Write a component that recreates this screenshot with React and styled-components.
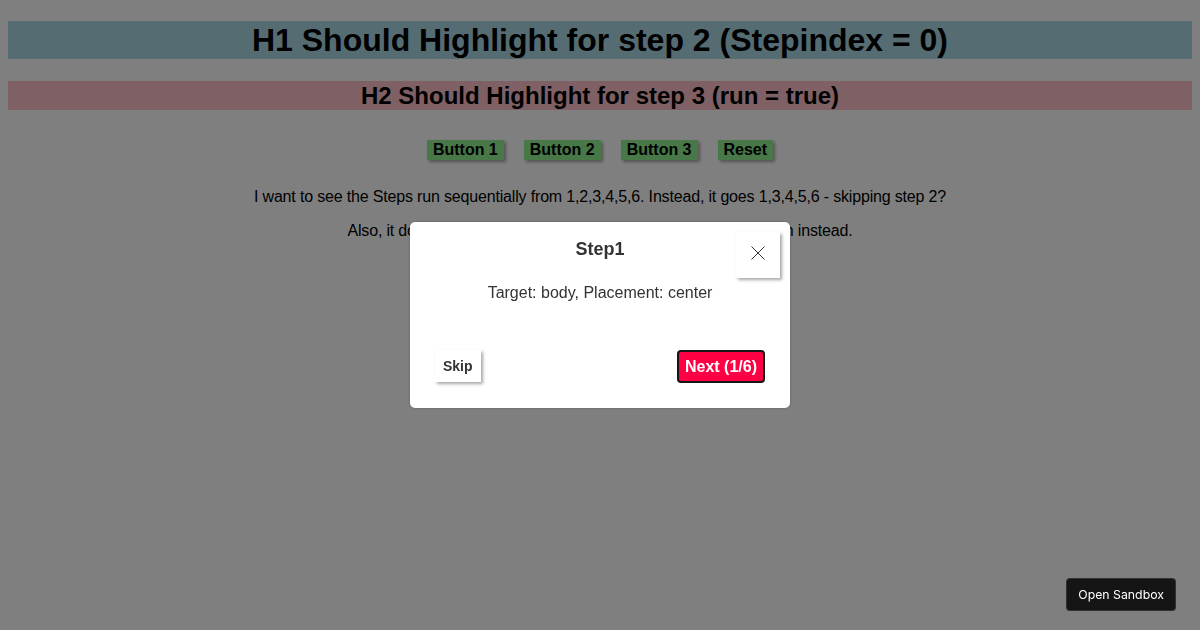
import styled, { createGlobalStyle } from "styled-components";

const GlobalStyle = createGlobalStyle`
  html, body {
    background: #fff;
  }
  body {
    margin: 0 8px 8px;
    font-family: "Liberation Sans", Arial, sans-serif;
    color: #000;
  }
`;

const Heading1 = styled.h1`
  background: lightblue;
  text-align: center;
  font-size: 32px;
  line-height: 38px;
  margin: 21.44px 0;
`;

const Heading2 = styled.h2`
  background: pink;
  text-align: center;
  font-size: 24px;
  line-height: 29px;
  margin: 19.92px 0;
`;

const Controls = styled.div`
  text-align: center;
  padding-bottom: 2px;
`;

// every button in the demo shares the same look
const Btn = styled.button`
  font-family: "Liberation Sans", Arial, sans-serif;
  font-weight: bold;
  font-size: 16px;
  margin: 10px;
  border: none;
  cursor: pointer;
  box-shadow: 2px 2px 3px rgba(0, 0, 0, 0.35);
`;

const StepButton = styled(Btn)`
  background: lightgreen;
  color: #000;
  padding: 1px 6px;
  line-height: 18.4px;
`;

const Note = styled.p`
  text-align: center;
  font-size: 16px;
  letter-spacing: -0.17px;
  margin: 16px 0;
`;

const Overlay = styled.div`
  position: fixed;
  inset: 0;
  background: rgba(0, 0, 0, 0.5);
  display: flex;
  align-items: center;
  justify-content: center;
`;

const Tooltip = styled.div`
  position: relative;
  width: 380px;
  box-sizing: border-box;
  padding: 15px;
  background: #fff;
  border-radius: 5px;
  color: #333;
  font-size: 16px;
  line-height: 1.4;
  text-align: center;
  box-shadow: 0 0 3px rgba(0, 0, 0, 0.25);
`;

const Title = styled.h4`
  margin: 0;
  font-size: 18px;
  font-weight: bold;
`;

const Content = styled.div`
  padding: 20px 10px;
`;

const Footer = styled.div`
  margin-top: 15px;
  display: flex;
  align-items: center;
  justify-content: space-between;
`;

const SkipButton = styled(Btn)`
  background: #fff;
  color: #333;
  font-size: 14px;
  line-height: 16px;
  padding: 8px;
`;

const NextButton = styled(Btn)`
  background: #ff0044;
  color: #fff;
  border: 2px solid #161616;
  border-radius: 4px;
  padding: 6px;
  line-height: 17px;
  box-shadow: none;
`;

const CloseButton = styled(Btn)`
  position: absolute;
  top: 0;
  right: 0;
  background: #fff;
  padding: 14px 15px 18px;
  line-height: 0;
  svg {
    display: block;
  }
`;

const SandboxLink = styled.a`
  position: fixed;
  right: 24px;
  bottom: 19px;
  display: flex;
  align-items: center;
  height: 33px;
  box-sizing: border-box;
  padding: 0 11px;
  background: #151515;
  border: 1px solid rgba(255, 255, 255, 0.12);
  border-radius: 4px;
  color: #fff;
  font-family: Inter, "Liberation Sans", sans-serif;
  font-size: 12.3px;
  text-decoration: none;
`;

function CloseIcon() {
  return (
    <svg width="14" height="14" viewBox="0 0 14 14">
      <path d="M0.5 0.5 L13.5 13.5 M13.5 0.5 L0.5 13.5" stroke="#333" strokeWidth="1" fill="none" />
    </svg>
  );
}

export default function App() {
  return (
    <>
      <GlobalStyle />
      <Heading1>H1 Should Highlight for step 2 (Stepindex = 0)</Heading1>
      <Heading2>H2 Should Highlight for step 3 (run = true)</Heading2>
      <Controls>
        <StepButton>Button 1</StepButton>
        <StepButton>Button 2</StepButton>
        <StepButton>Button 3</StepButton>
        <StepButton>Reset</StepButton>
      </Controls>
      <Note>
        I want to see the Steps run sequentially from 1,2,3,4,5,6. Instead, it goes 1,3,4,5,6 - skipping step 2?
      </Note>
      <Note>Also, it doesn't highlight the H1 on step 2, it shows on the screen instead.</Note>

      <Overlay>
        <Tooltip>
          <CloseButton aria-label="Close">
            <CloseIcon />
          </CloseButton>
          <Title>Step1</Title>
          <Content>Target: body, Placement: center</Content>
          <Footer>
            <SkipButton>Skip</SkipButton>
            <NextButton>Next (1/6)</NextButton>
          </Footer>
        </Tooltip>
      </Overlay>

      <SandboxLink href="#">Open Sandbox</SandboxLink>
    </>
  );
}
